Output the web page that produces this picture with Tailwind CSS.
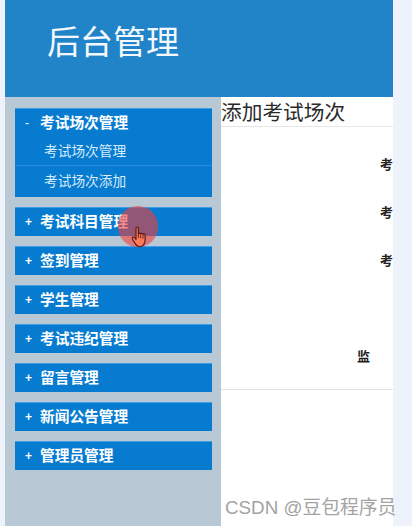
<!DOCTYPE html>
<html lang="zh">
<head>
<meta charset="utf-8">
<script src="https://cdn.jsdelivr.net/npm/@tailwindcss/browser@4"></script>
</head>
<body class="bg-[#eef2fb]">
<div class="relative w-[412px] h-[526px] overflow-hidden pl-[5px] pr-[19px] font-['Liberation_Sans','Noto_Sans_CJK_SC',sans-serif]">
  <header class="h-[97px] bg-[#2184c9] pl-[42px] pt-[22px] text-[33px] leading-[42px] text-[#f2f8fd]">后台管理</header>
  <div class="flex h-[429px]">
    <aside class="w-[216px] shrink-0 bg-[#b8c8d4] pl-[10px] pr-[9px] pt-[11px] flex flex-col gap-[10px] text-white text-[14.700px] font-bold">
      <div class="bg-[#067bd0] border-t border-[#3f9fe6] h-[88.500px]">
        <div class="h-[28px] leading-[28px] pl-[10px] flex"><span class="w-[15px] font-normal text-[12px]">-</span>考试场次管理</div>
        <div class="h-[29px] leading-[29px] pl-[29px] text-[13.700px] font-normal text-[#d8ecfb] border-b border-[#2a8bd8]">考试场次管理</div>
        <div class="h-[29px] leading-[31px] pl-[29px] text-[13.700px] font-normal text-[#d8ecfb]">考试场次添加</div>
      </div>
      <div class="bg-[#067bd0] border-t border-[#3f9fe6] h-[29px] leading-[28px] pl-[10px] flex"><span class="w-[15px] text-[12px]">+</span>考试科目管理</div>
      <div class="bg-[#067bd0] border-t border-[#3f9fe6] h-[29px] leading-[28px] pl-[10px] flex"><span class="w-[15px] text-[12px]">+</span>签到管理</div>
      <div class="bg-[#067bd0] border-t border-[#3f9fe6] h-[29px] leading-[28px] pl-[10px] flex"><span class="w-[15px] text-[12px]">+</span>学生管理</div>
      <div class="bg-[#067bd0] border-t border-[#3f9fe6] h-[29px] leading-[28px] pl-[10px] flex"><span class="w-[15px] text-[12px]">+</span>考试违纪管理</div>
      <div class="bg-[#067bd0] border-t border-[#3f9fe6] h-[29px] leading-[28px] pl-[10px] flex"><span class="w-[15px] text-[12px]">+</span>留言管理</div>
      <div class="bg-[#067bd0] border-t border-[#3f9fe6] h-[29px] leading-[28px] pl-[10px] flex"><span class="w-[15px] text-[12px]">+</span>新闻公告管理</div>
      <div class="bg-[#067bd0] border-t border-[#3f9fe6] h-[29px] leading-[28px] pl-[10px] flex"><span class="w-[15px] text-[12px]">+</span>管理员管理</div>
    </aside>
    <main class="w-[172px] shrink-0 bg-white overflow-hidden">
      <h1 class="h-[30px] border-b border-[#e6e6e6] text-[20.700px] leading-[31px] text-[#2a2a2a] font-normal whitespace-nowrap">添加考试场次</h1>
      <div class="h-[263px] border-b border-[#e2e2e2] text-[13px] font-bold text-[#222] pt-[30px] flex flex-col">
        <div class="h-[48px] leading-[16px] pl-[159px] whitespace-nowrap">考</div>
        <div class="h-[48px] leading-[16px] pl-[159px] whitespace-nowrap">考</div>
        <div class="h-[96px] leading-[16px] pl-[159px] whitespace-nowrap">考</div>
        <div class="leading-[16px] pl-[136px]">监</div>
      </div>
    </main>
  </div>
  <!-- pointer highlight overlay -->
  <div class="absolute left-[118px] top-[206px] w-[40px] h-[41px] rounded-full bg-[#f0403a]/60"></div>
  <svg class="absolute left-[131px] top-[226px] w-[18px] h-[22px]" viewBox="0 0 18 22">
    <path d="M5 2.2c0-1.6 2.4-1.6 2.4 0V8c0-1 2-1.2 2.3 0 .2-1 2.1-1 2.3.3.4-.8 2.1-.6 2.1.8V14c0 3-1.8 6.5-4.6 6.5H8C5.800 20.500 5 19 3.500 16.500L1.500 13c-.8-1.500 1-2.700 2-1.500L5 13.500Z" fill="#ff7a5c" stroke="#5a1a14" stroke-width="1.200" stroke-linejoin="round"/>
    <path d="M7.400 8v4M9.700 8.300v4M12 8.600v4" stroke="#5a1a14" stroke-width=".9" fill="none"/>
  </svg>
  <!-- watermark -->
  <div class="absolute left-[225px] top-[497px] text-[18.800px] leading-[22px] text-[#a3a3a3] whitespace-nowrap">CSDN @豆包程序员</div>
</div>
</body>
</html>
